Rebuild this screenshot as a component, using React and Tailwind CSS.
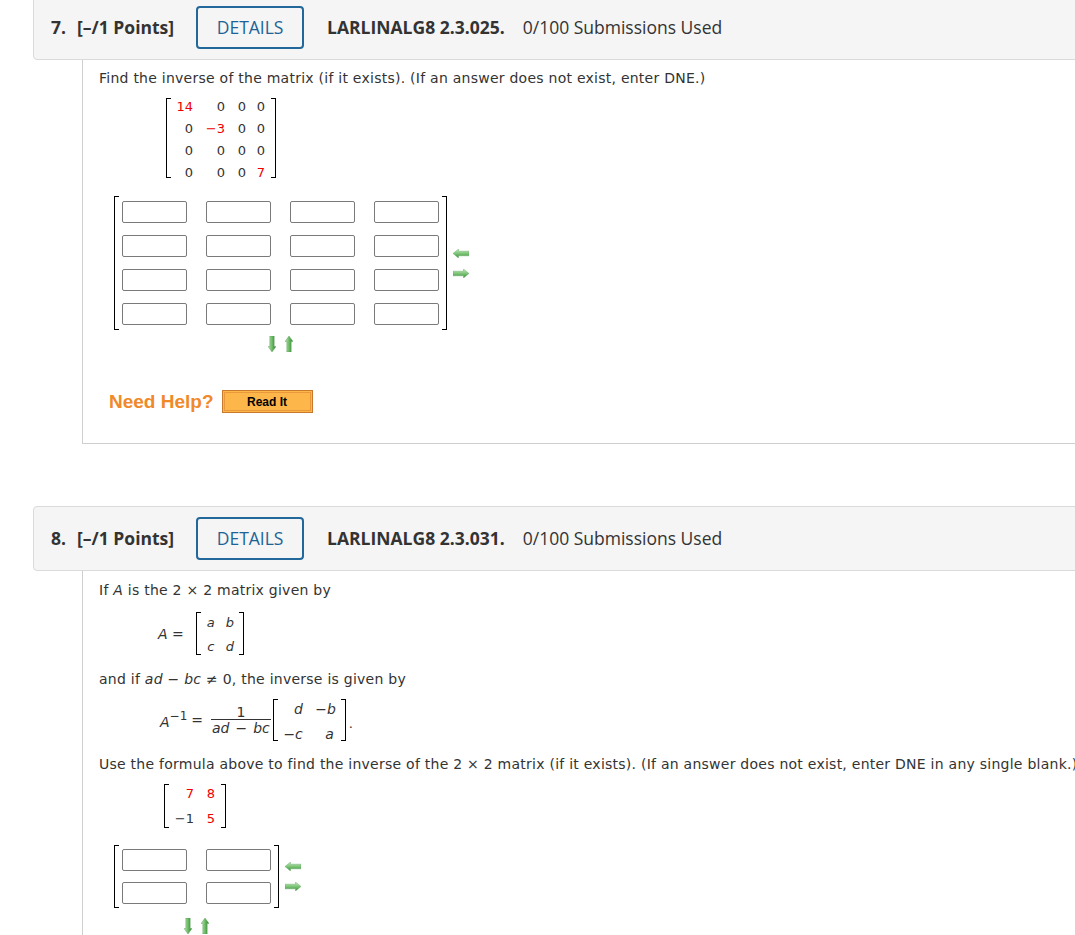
import React, { useId } from "react";

const RED = "text-[#ee0000]";

function HArrow({ dir }) {
  const id = useId().replace(/:/g, "");
  const d =
    dir === "left"
      ? "M0,4.5 L5.5,0 L5.5,2.2 L16,2.2 L16,6.8 L5.5,6.8 L5.5,9 Z"
      : "M16,4.5 L10.5,0 L10.5,2.2 L0,2.2 L0,6.8 L10.5,6.8 L10.5,9 Z";
  return (
    <svg width="16" height="9" viewBox="0 0 16 9" className="block">
      <defs>
        <linearGradient id={id} x1="0" y1="0" x2="0" y2="1">
          <stop offset="0" stopColor="#c8ebc2" />
          <stop offset="0.5" stopColor="#7cc476" />
          <stop offset="1" stopColor="#3b8f3b" />
        </linearGradient>
      </defs>
      <path d={d} fill={`url(#${id})`} stroke="#5aa55a" strokeWidth="0.4" />
    </svg>
  );
}

function VArrow({ dir }) {
  const id = useId().replace(/:/g, "");
  const d =
    dir === "down"
      ? "M1.8,0 L6.2,0 L6.2,10.5 L8,10.5 L4,16 L0,10.5 L1.8,10.5 Z"
      : "M1.8,16 L6.2,16 L6.2,5.5 L8,5.5 L4,0 L0,5.5 L1.8,5.5 Z";
  return (
    <svg width="8" height="16" viewBox="0 0 8 16" className="block">
      <defs>
        <linearGradient id={id} x1="0" y1="0" x2="1" y2="0">
          <stop offset="0" stopColor="#bfe6b9" />
          <stop offset="0.5" stopColor="#6dbb67" />
          <stop offset="1" stopColor="#2f7f2f" />
        </linearGradient>
      </defs>
      <path d={d} fill={`url(#${id})`} stroke="#4f9a4f" strokeWidth="0.4" />
    </svg>
  );
}

function LB() {
  return <div className="w-[5px] shrink-0 border-l border-t border-b border-black" />;
}
function RB() {
  return <div className="w-[5px] shrink-0 border-r border-t border-b border-black" />;
}

function Header({ num, code }) {
  return (
    <div
      className="h-[65px] flex items-center border border-[#dadada] rounded-[4px] bg-[#f5f5f5] pl-[17px] text-[#333] text-[17.5px]"
      style={{ fontFamily: '"Open Sans", sans-serif' }}
    >
      <span className="font-bold">{num}</span>
      <span className="font-bold ml-[11px]">[–/1 Points]</span>
      <div className="ml-[22px] w-[108px] h-[43px] border-2 border-[#22689a] rounded-[4px] flex items-center justify-center text-[#1d6396] font-medium">
        DETAILS
      </div>
      <span className="font-bold ml-[23px]">{code}</span>
      <span className="ml-[18px]">0/100 Submissions Used</span>
    </div>
  );
}

function InputBox() {
  return <div className="w-[65px] h-[22px] border border-[#7a7a7a] rounded-[2px] bg-white" />;
}

function AnswerMatrix({ rows, cols, arrowGap }) {
  const cells = [];
  for (let i = 0; i < rows * cols; i++) cells.push(<InputBox key={i} />);
  return (
    <div className="inline-flex flex-col items-center">
      <div className="flex items-center">
        <div className="flex items-stretch">
          <LB />
          <div
            className={
              (cols === 4 ? "grid-cols-4 gap-y-[12px] py-[5px]" : "grid-cols-2 gap-y-[11px] py-[4px]") +
              " grid gap-x-[19px] px-[3px]"
            }
          >
            {cells}
          </div>
          <RB />
        </div>
        <div className="ml-[6px] flex flex-col gap-[11px]">
          <HArrow dir="left" />
          <HArrow dir="right" />
        </div>
      </div>
      <div className={"flex gap-[9px] pr-[22px] " + arrowGap}>
        <VArrow dir="down" />
        <VArrow dir="up" />
      </div>
    </div>
  );
}

const P = "text-[14px] tracking-[0.25px] leading-[16px]";

export default function App() {
  const body = { fontFamily: '"DejaVu Sans", Verdana, sans-serif' };
  return (
    <div className="w-[1075px] h-[935px] overflow-hidden bg-white">
      <div className="mt-[-5px] ml-[33px] w-[1100px]">
        <Header num="7." code="LARLINALG8 2.3.025." />
        <div
          className="ml-[49px] h-[384px] border-l border-b border-[#cfcfcf] pl-[16px] pt-[10px] text-[13px] leading-[16px] text-[#333]"
          style={body}
        >
          <div className={P}>Find the inverse of the matrix (if it exists). (If an answer does not exist, enter DNE.)</div>
          <div className="mt-[12px] ml-[67px] flex items-stretch">
            <LB />
            <div className="grid grid-cols-[22px_32px_21px_19px] auto-rows-[22px] items-center text-right mt-[-2.5px] mb-[-5.5px]">
              <span className={RED}>14</span>
              <span>0</span>
              <span>0</span>
              <span>0</span>
              <span>0</span>
              <span className={RED}>−3</span>
              <span>0</span>
              <span>0</span>
              <span>0</span>
              <span>0</span>
              <span>0</span>
              <span>0</span>
              <span>0</span>
              <span>0</span>
              <span>0</span>
              <span className={RED}>7</span>
            </div>
            <div className="w-[6px]" />
            <RB />
          </div>
          <div className="mt-[18px] ml-[15px]">
            <AnswerMatrix rows={4} cols={4} arrowGap="mt-[6px]" />
          </div>
          <div className="mt-[38px] ml-[10px] flex items-center">
            <span
              className="text-[19px] font-bold text-[#f0892a]"
              style={{ fontFamily: '"Liberation Sans", Arial, sans-serif' }}
            >
              Need Help?
            </span>
            <div className="ml-[8px] w-[91px] h-[23px] border border-[#c8792c] bg-[#fdb64a] p-[1px]">
              <div
                className="w-full h-full border border-[#e9993c] flex items-center justify-center text-[12px] font-bold text-black"
                style={{ fontFamily: '"Liberation Sans", Arial, sans-serif' }}
              >
                Read It
              </div>
            </div>
          </div>
        </div>

        <div className="h-[62px]" />

        <Header num="8." code="LARLINALG8 2.3.031." />
        <div
          className="ml-[49px] h-[400px] border-l border-[#cfcfcf] pl-[16px] pt-[11px] text-[13px] leading-[16px] text-[#333]"
          style={body}
        >
          <div className={P}>
            If <i>A</i> is the 2 × 2 matrix given by
          </div>
          <div className="mt-[14px] ml-[59px] flex items-center">
            <span className="text-[14px]">
              <i>A</i> =
            </span>
            <div className="ml-[12px] flex items-stretch">
              <LB />
              <div className="grid grid-cols-[20px_18px] auto-rows-[24px] items-center text-center italic mt-[-1px] mb-[-4px]">
                <span>a</span>
                <span>b</span>
                <span>c</span>
                <span>d</span>
              </div>
              <RB />
            </div>
          </div>
          <div className={"mt-[16px] " + P}>
            and if <i>ad</i> − <i>bc</i> ≠ 0, the inverse is given by
          </div>
          <div className="mt-[12px] ml-[61px] flex items-center">
            <span className="mt-[4px] text-[14px]">
              <i>A</i>
              <span className="relative top-[-7px] text-[12px]">−1</span>
            </span>
            <span className="ml-[4px] text-[14px]">=</span>
            <div className="ml-[8px] inline-flex flex-col items-center text-[14px]">
              <span className="leading-[14px] px-[1px]">1</span>
              <span className="border-t border-[#333] leading-[16px] flex items-center px-[1px]">
                <i>ad</i>
                <span className="mx-[6px]">−</span>
                <i>bc</i>
              </span>
            </div>
            <div className="ml-[2px] flex items-stretch text-[14px]">
              <LB />
              <div className="grid grid-cols-[25px_33px] auto-rows-[25px] items-center text-right italic mt-[-2.5px] mb-[-5.5px]">
                <span>d</span>
                <span>−b</span>
                <span>−c</span>
                <span className="pr-[2px]">a</span>
              </div>
              <div className="w-[5px]" />
              <RB />
            </div>
            <span className="ml-[3px] mt-[8px]">.</span>
          </div>
          <div className={"mt-[15px] whitespace-nowrap " + P}>
            Use the formula above to find the inverse of the 2 × 2 matrix (if it exists). (If an answer does not exist, enter DNE in any single blank.)
          </div>
          <div className="mt-[12px] ml-[65px] flex items-stretch">
            <LB />
            <div className="grid grid-cols-[25px_21px] auto-rows-[25px] items-center text-right mt-[-2.5px] mb-[-3.5px]">
              <span className={RED}>7</span>
              <span className={RED}>8</span>
              <span>−1</span>
              <span className={RED}>5</span>
            </div>
            <div className="w-[6px]" />
            <RB />
          </div>
          <div className="mt-[17px] ml-[15px]">
            <AnswerMatrix rows={2} cols={2} arrowGap="mt-[10px]" />
          </div>
        </div>
      </div>
    </div>
  );
}
